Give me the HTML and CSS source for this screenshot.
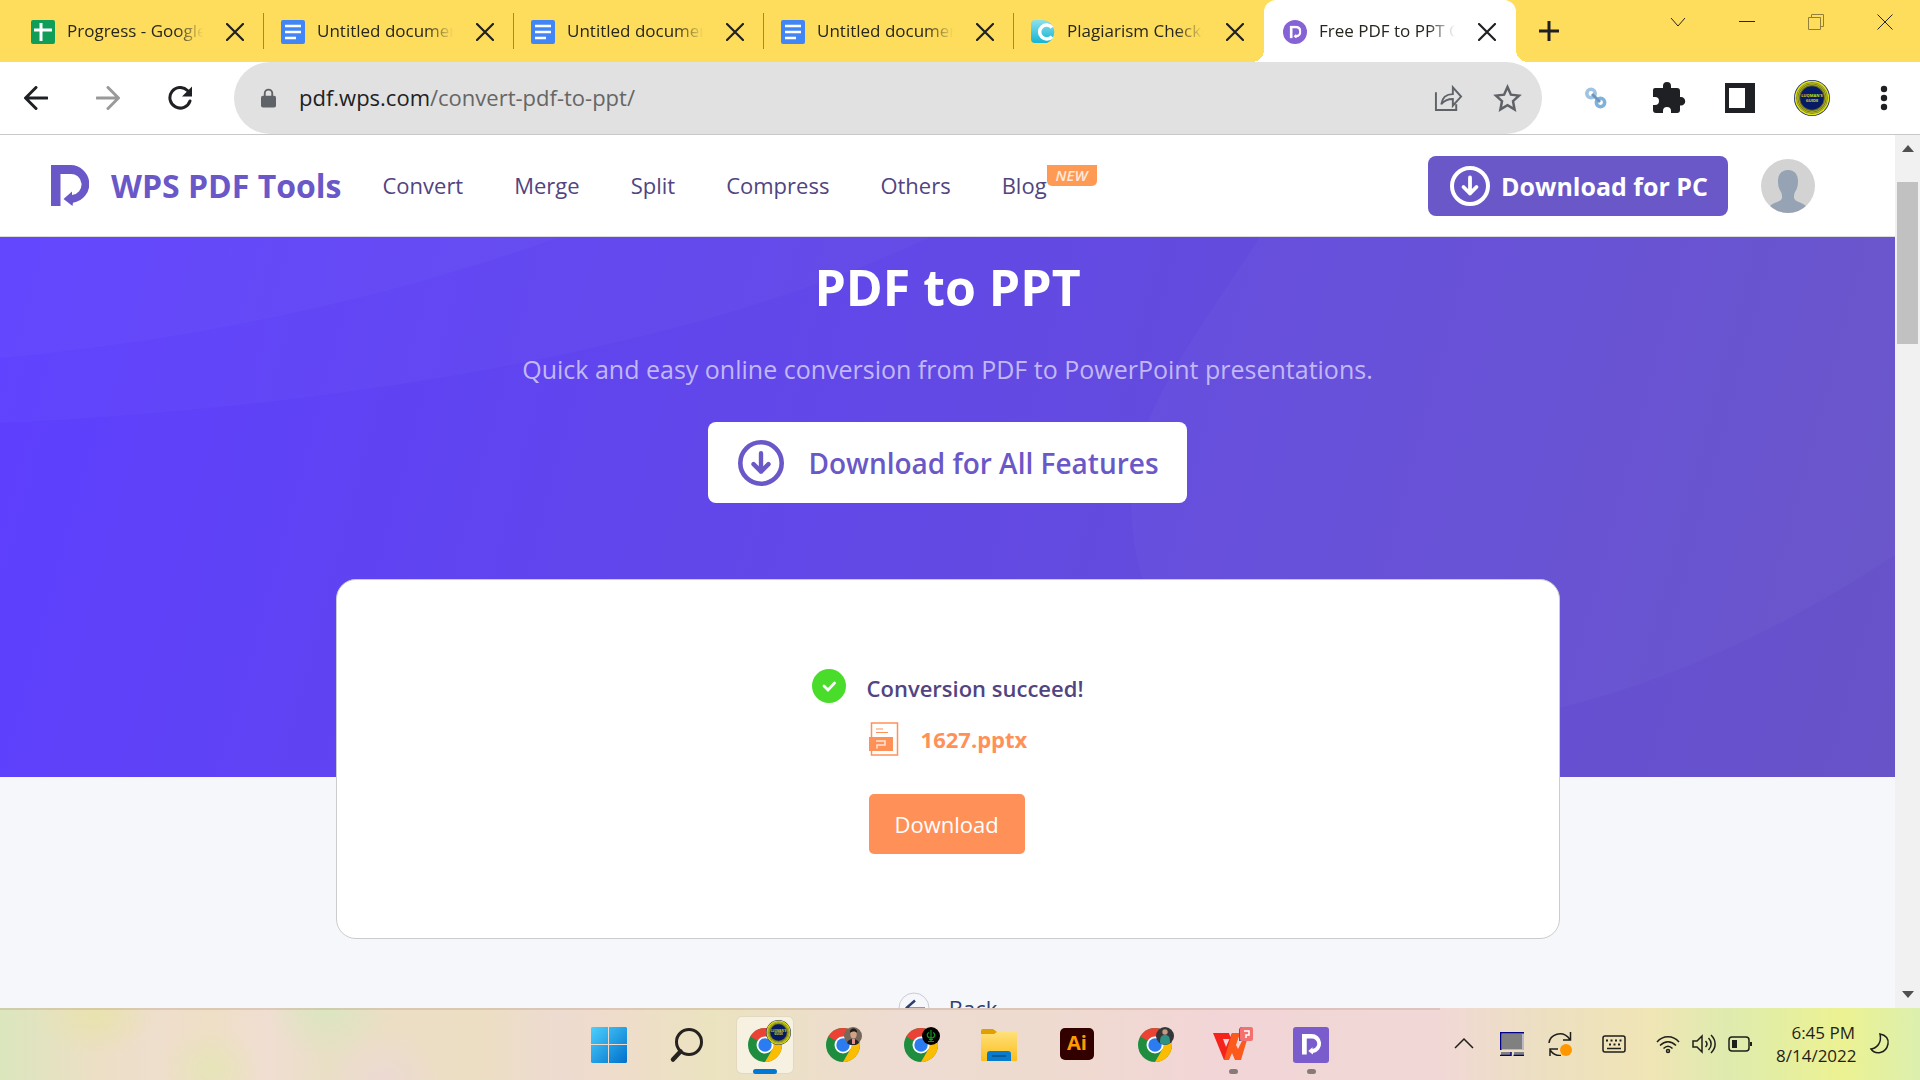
FILE: index.html
```
<!DOCTYPE html>
<html lang="en">
<head>
    <meta charset="UTF-8">
    <meta name="viewport" content="width=device-width, initial-scale=1.0">
    <title>Free PDF to PPT Converter</title>
    <link rel="stylesheet" href="styles.css">
</head>
<body>
    <!-- shared icons -->
    <svg class="sprite" aria-hidden="true">
        <symbol id="docs" viewBox="0 0 24 24">
            <rect width="24" height="24" rx="2" fill="#4285f4"/>
            <path d="M4 6h16M4 12h16M4 18h11" stroke="#fff" stroke-width="2.600"/>
        </symbol>
        <symbol id="close" viewBox="0 0 18 18">
            <path d="M1 1l16 16M17 1L1 17" stroke="#1f2023" stroke-width="2.200" stroke-linecap="round"/>
        </symbol>
        <symbol id="wps-p" viewBox="0 0 38 41">
            <path fill="currentColor" d="M0 0h19a19 19 0 0 1 3 37.800l-.5 3.200-9-7 8.500-7.500v3.500A10.500 10.500 0 0 0 19 9H9.500v32H0z"/>
        </symbol>
        <symbol id="down-circle" viewBox="0 0 40 40">
            <g fill="none" stroke="currentColor" stroke-linecap="round" stroke-linejoin="round">
                <circle cx="20" cy="20" r="18" stroke-width="4"/>
                <path d="M20 11.500v16M13.500 21l6.500 6.500 6.500-6.500" stroke-width="3.800"/>
            </g>
        </symbol>
        <symbol id="chrome" viewBox="0 0 34 34">
            <circle cx="17" cy="17" r="17" fill="#1e8e3e"/>
            <path d="M17 17L2.300 8.500a17 17 0 0 1 29.400 0z" fill="#ea4335"/>
            <path d="M17 8.500h14.700A17 17 0 0 1 17 34l7.400-12.800z" fill="#fbbc04"/>
            <circle cx="17" cy="17" r="8.500" fill="#fff"/>
            <circle cx="17" cy="17" r="6.700" fill="#2b7cf0"/>
        </symbol>
        <symbol id="guide" viewBox="0 0 36 36">
            <circle cx="18" cy="18" r="18" fill="#232d6c"/>
            <circle cx="18" cy="18" r="17.200" fill="#dfe316"/>
            <circle cx="18" cy="18" r="14.500" fill="#6d7123"/>
            <circle cx="18" cy="18" r="15.500" fill="none" stroke="#8c9020"/>
            <circle cx="18" cy="18" r="13.500" fill="none" stroke="#a8ac1a"/>
            <circle cx="18" cy="18" r="11.800" fill="#061a66"/>
            <text x="18" y="17" class="guide-text">LUQMAN'S</text>
            <text x="18" y="22" class="guide-text">GUIDE</text>
        </symbol>
    </svg>

    <div class="tabs">
        <div class="tab">
            <svg class="favicon" viewBox="0 0 24 24"><rect width="24" height="24" rx="2" fill="#0f9d58"/><path d="M10 3v18M3 10h18" stroke="#fff" stroke-width="3"/></svg>
            <span class="tab-title">Progress - Google Sheets</span>
            <button class="tab-close" aria-label="Close tab"><svg><use href="#close"/></svg></button>
        </div>
        <div class="tab">
            <svg class="favicon"><use href="#docs"/></svg>
            <span class="tab-title">Untitled document - Google</span>
            <button class="tab-close" aria-label="Close tab"><svg><use href="#close"/></svg></button>
        </div>
        <div class="tab">
            <svg class="favicon"><use href="#docs"/></svg>
            <span class="tab-title">Untitled document - Google</span>
            <button class="tab-close" aria-label="Close tab"><svg><use href="#close"/></svg></button>
        </div>
        <div class="tab">
            <svg class="favicon"><use href="#docs"/></svg>
            <span class="tab-title">Untitled document - Google</span>
            <button class="tab-close" aria-label="Close tab"><svg><use href="#close"/></svg></button>
        </div>
        <div class="tab last">
            <svg class="favicon" viewBox="0 0 24 24">
                <defs><linearGradient id="teal" x2="0" y2="1"><stop stop-color="#8de0ea"/><stop offset="1" stop-color="#13b4d4"/></linearGradient></defs>
                <path d="M4 0h8a12 12 0 0 1 4 23H4a4 4 0 0 1-4-4V4a4 4 0 0 1 4-4z" fill="url(#teal)"/>
                <path d="M21 7.500a7 7 0 1 0 0 9" fill="none" stroke="#fff" stroke-width="3.500"/>
            </svg>
            <span class="tab-title">Plagiarism Checker | Copy</span>
            <button class="tab-close" aria-label="Close tab"><svg><use href="#close"/></svg></button>
        </div>
        <div class="tab active">
            <svg class="favicon" viewBox="0 0 24 24">
                <circle cx="12" cy="12" r="12" fill="#8562d6"/>
                <svg class="logo-p" x="6.500" y="5.500" width="12" height="13"><use href="#wps-p"/></svg>
            </svg>
            <span class="tab-title">Free PDF to PPT Converter</span>
            <button class="tab-close" aria-label="Close tab"><svg><use href="#close"/></svg></button>
        </div>
        <button class="new-tab" aria-label="New tab"><svg viewBox="0 0 22 22"><path d="M11 1v20M1 11h20" stroke="#1f2023" stroke-width="3"/></svg></button>
        <div class="window-controls">
            <button aria-label="Search tabs"><svg viewBox="0 0 16 16"><path d="M1 4l7 8 7-8"/></svg></button>
            <button aria-label="Minimize"><svg viewBox="0 0 16 16"><path d="M0 7.500h16"/></svg></button>
            <button class="faded" aria-label="Restore"><svg viewBox="0 0 16 16"><path d="M.5 3.500h12v12H.5zM3.500 3.500v-3h12v12h-3"/></svg></button>
            <button aria-label="Close window"><svg viewBox="0 0 16 16"><path d="M.5.5l15 15M15.500.5l-15 15"/></svg></button>
        </div>
    </div>

    <div class="toolbar">
        <div class="nav-buttons">
            <button aria-label="Back"><svg viewBox="0 0 24 24"><path d="M23 12H2M12 1.500L1.500 12 12 22.500"/></svg></button>
            <button class="disabled" aria-label="Forward"><svg viewBox="0 0 24 24"><path d="M1 12h21M12 1.500L22.500 12 12 22.500"/></svg></button>
            <button aria-label="Reload"><svg viewBox="0 0 24 24"><path d="M22 15a10.300 10.300 0 1 1-2.500-10.500"/><path d="M24 .5v10H14z" class="solid"/></svg></button>
        </div>
        <div class="omnibox">
            <svg class="lock" viewBox="0 0 16 20"><path d="M4 8V5a4 4 0 0 1 8 0v3" fill="none" stroke="#5f6368" stroke-width="2"/><rect y="7.500" width="16" height="12.500" rx="2" fill="#5f6368"/></svg>
            <a class="url" href="#">pdf.wps.com<span>/convert-pdf-to-ppt/</span></a>
            <button aria-label="Share"><svg viewBox="0 0 30 28" fill="none" stroke="#5f6368" stroke-width="2"><path d="M2 8v18.500h21v-6M7.500 20.500c1-7 5-10.500 12-10.500V3l8.500 9.500-8.500 9.500v-7c-5 0-9 1.500-12 5.500z"/></svg></button>
            <button aria-label="Bookmark"><svg viewBox="0 0 28 28" fill="none" stroke="#5f6368" stroke-width="2.500"><path d="M14 3l3.400 7.700 8.100.9-6 5.600 1.600 8.200-7.100-4.200-7.100 4.200 1.600-8.200-6-5.600 8.100-.9z"/></svg></button>
        </div>
        <div class="extensions">
            <button aria-label="Link extension"><svg viewBox="0 0 36 36" fill="none" stroke="#7fb2da" stroke-width="3.500"><circle cx="13" cy="13.500" r="4.200" stroke="#9fc3e0"/><circle cx="22.500" cy="22.500" r="4.200"/><path d="M14 14l8 8" stroke="#6a98c4" stroke-width="3"/></svg></button>
            <button aria-label="Extensions"><svg viewBox="0 0 36 36" fill="#1f2023"><path d="M5 8h8V6a4 4 0 0 1 8 0v2h6a3 3 0 0 1 3 3v6h1a4 4 0 0 1 0 8.500h-1V30a3 3 0 0 1-3 3h-6v-2a4 4 0 0 0-8 0v2H6a3 3 0 0 1-3-3v-5h2a4 4 0 0 0 0-8H3v-7a2 2 0 0 1 2-2z"/></svg></button>
            <button aria-label="Side panel"><svg viewBox="0 0 36 36"><path d="M3 3h30v30H3zM7 8v20h16V8z" fill="#1f2023" fill-rule="evenodd"/></svg></button>
            <button aria-label="Profile"><svg><use href="#guide"/></svg></button>
            <button aria-label="Menu"><svg viewBox="0 0 36 36" fill="#1f2023"><circle cx="18" cy="9" r="3.200"/><circle cx="18" cy="18" r="3.200"/><circle cx="18" cy="27" r="3.200"/></svg></button>
        </div>
    </div>

    <div class="viewport">
        <div class="page">
            <header class="site-header">
                <a class="brand" href="#">
                    <svg><use href="#wps-p"/></svg>
                    WPS PDF Tools
                </a>
                <nav>
                    <a href="#">Convert</a>
                    <a href="#">Merge</a>
                    <a href="#">Split</a>
                    <a href="#">Compress</a>
                    <a href="#">Others</a>
                    <a href="#" class="blog">Blog<span class="badge">NEW</span></a>
                </nav>
                <button class="btn-pc"><svg><use href="#down-circle"/></svg>Download for PC</button>
                <svg class="avatar" viewBox="0 0 54 54">
                    <defs><clipPath id="round"><circle cx="27" cy="27" r="27"/></clipPath></defs>
                    <circle cx="27" cy="27" r="27" fill="#d3d3d3"/>
                    <path clip-path="url(#round)" fill="#96a3b4" d="M27 11c7 0 10 5 10 11 0 5-1 8-3 11-1 2-1 4-1 6 1 4 8 4 12 8v9H9v-9c4-4 11-4 12-8 0-2 0-4-1-6-2-3-3-6-3-11 0-6 3-11 10-11z"/>
                </svg>
            </header>

            <section class="hero">
                <svg class="hero-bg" viewBox="0 0 1895 540" preserveAspectRatio="none" aria-hidden="true">
                    <path d="M0 0h930C700 110 350 170 0 186z"/>
                    <path d="M0 0h560C380 65 180 105 0 121z"/>
                    <path d="M1260 0C1195 100 1131 180 1131 262c0 130 80 230 260 230 190 0 370-85 504-174V0z"/>
                </svg>
                <h1>PDF to PPT</h1>
                <p>Quick and easy online conversion from PDF to PowerPoint presentations.</p>
                <button class="btn-all"><svg><use href="#down-circle"/></svg>Download for All Features</button>
            </section>

            <main class="card">
                <div class="result">
                    <svg class="check" viewBox="0 0 34 34"><circle cx="17" cy="17" r="17" fill="#49dc2a"/><path d="M12 17l4 4 6.500-7" fill="none" stroke="#fff" stroke-width="2.800" stroke-linecap="round"/></svg>
                    <h2>Conversion succeed!</h2>
                    <a class="file" href="#">
                        <svg viewBox="0 0 30 34">
                            <rect x="2.500" y="1" width="26" height="32" fill="#fff" stroke="#ff9158" stroke-width="1.500"/>
                            <path d="M7 7h7M7 10.500h12" stroke="#ff9158"/>
                            <path d="M0 15h24v14H0z" fill="#ff9158"/>
                            <path d="M7 19h9v4H8v3.500" fill="none" stroke="#ffe3d4" stroke-width="1.500"/>
                        </svg>
                        1627.pptx
                    </a>
                    <button class="btn-download">Download</button>
                </div>
            </main>

            <a class="back" href="#">
                <svg viewBox="0 0 32 32" fill="none"><circle cx="16" cy="16" r="15" stroke="#c9cbd3"/><path d="M27 15.500H9" stroke="#8d96b5"/><path d="M17 8.500L9 15.500l8 7" stroke="#2f3e74" stroke-width="2.500"/></svg>
                Back
            </a>
        </div>
        <div class="scrollbar">
            <svg viewBox="0 0 12 7"><path d="M0 7l6-7 6 7z"/></svg>
            <div class="thumb"></div>
            <svg viewBox="0 0 12 7"><path d="M0 0h12L6 7z"/></svg>
        </div>
    </div>

    <footer class="taskbar">
        <div class="apps">
            <button aria-label="Start"><svg viewBox="0 0 36 36">
                <defs><linearGradient id="win" gradientUnits="userSpaceOnUse" x2="36" y2="36"><stop stop-color="#4cd0fd"/><stop offset="1" stop-color="#0070cc"/></linearGradient></defs>
                <path d="M1 0h16v17H0V1zM18 0h17l1 1v16H18zM0 18h17v18H1l-1-1zM18 18h18v17l-1 1H18z" fill="url(#win)"/></svg></button>
            <button aria-label="Search"><svg viewBox="0 0 36 36" fill="none" stroke="#26221f"><circle cx="20" cy="15" r="12.500" stroke-width="3"/><path d="M11.500 24.500L4 32.500" stroke-width="4.500" stroke-linecap="round"/></svg></button>
            <button class="running current" aria-label="Chrome">
                <svg class="small"><use href="#chrome"/></svg>
                <svg class="sub guide"><use href="#guide"/></svg>
            </button>
            <button aria-label="Chrome profile 2">
                <svg class="small"><use href="#chrome"/></svg>
                <svg class="sub" viewBox="0 0 18 18"><circle cx="9" cy="9" r="9" fill="#75685a"/><path d="M3 16c1-3 3-4 6-4s5 1 6 4a9 9 0 0 1-12 0z" fill="#26242a"/><path d="M8 12h3v5H8z" fill="#e58d8d"/><ellipse cx="9.500" cy="7" rx="3.200" ry="4.500" fill="#d3a184"/><path d="M6 6c-1-6 8-6 7 0-1-2-5-2-7 0z" fill="#201b1a"/></svg>
            </button>
            <button aria-label="Chrome profile 3">
                <svg class="small"><use href="#chrome"/></svg>
                <svg class="sub" viewBox="0 0 18 18"><circle cx="9" cy="9" r="9"/><path d="M9 3v8M7 5.500C4 7 5 11 9 11s5-4 2-5.500M6 14.500h6M7 12.500h4M9 11v3" fill="none" stroke="#0a9a18" stroke-width="1.200"/></svg>
            </button>
            <button aria-label="File Explorer"><svg viewBox="0 0 36 36">
                <defs><linearGradient id="folder" x2="0" y2="1"><stop stop-color="#ffe07a"/><stop offset="1" stop-color="#fbbe1c"/></linearGradient></defs>
                <path d="M0 4a2 2 0 0 1 2-2h10l4 3h20v8H0z" fill="#dfa000"/><path d="M0 7h13l3-2h20v28a1 1 0 0 1-1 1H1a1 1 0 0 1-1-1z" fill="url(#folder)"/>
                <path d="M6 34V27a3 3 0 0 1 3-3h18a3 3 0 0 1 3 3v7z" fill="#087ccc"/><path d="M11 29h14" stroke="#0a4c86" stroke-width="1.500"/></svg></button>
            <button aria-label="Illustrator"><svg viewBox="0 0 36 36"><rect x="1" y="1" width="34" height="32" rx="5" fill="#300"/><text x="18" y="23" class="ai-text">Ai</text></svg></button>
            <button aria-label="Chrome profile 4">
                <svg class="small"><use href="#chrome"/></svg>
                <svg class="sub" viewBox="0 0 18 18"><circle cx="9" cy="9" r="9" fill="#343638"/><path d="M4 16c0-6 1-8 5-8s5 2 5 8a9 9 0 0 1-10 0z" fill="#2d9185"/><circle cx="9" cy="5" r="2.700" fill="#c39a86"/></svg>
            </button>
            <button class="running" aria-label="WPS Office">
                <svg class="wps" viewBox="0 0 40 36">
                    <path d="M0 6h16l2 6h-8l3 8 6-14h8L15 33h-4z" fill="#f5231b"/>
                    <path d="M19 6h8l-4 12 2 4 8-16h3L28 33h-6l-3-7-3 7h-5z" fill="#fb5a1c"/>
                    <path d="M26 3c0-3 3-4 8-3l-2 14h-6z" fill="#535c98"/><rect x="27" y="0" width="13" height="14" rx="2" fill="#f4716f"/><path d="M31 4h5v4h-3v3" fill="none" stroke="#fff" stroke-width="1.500"/>
                </svg>
            </button>
            <button class="running" aria-label="WPS PDF">
                <svg viewBox="0 0 36 36"><rect width="36" height="36" rx="3" fill="#7a5ccd"/><path transform="translate(9 7) scale(.5)" fill="#fff" d="M0 0h19a19 19 0 0 1 3 37.800l-.5 3.200-9-7 8.500-7.500v3.500A10.500 10.500 0 0 0 19 9H9.500v32H0z"/></svg>
            </button>
        </div>
        <div class="tray">
            <svg viewBox="0 0 24 24"><path d="M3 16l9-9 9 9"/></svg>
            <svg viewBox="0 0 24 24" class="flat"><path d="M0 0h24v18H0z" fill="#b8b8c8"/><path d="M.5 18V.5H24" fill="none" stroke="#00008b" stroke-width="2"/><path d="M2 2h20v15H2zM1 20h10v3H1zM14 20h10v3H14z" fill="#808080"/><path d="M0 23.500h11M13.500 23.500H24M11 20v4" stroke="#00008b"/></svg>
            <svg viewBox="0 0 24 24"><path d="M1 11C2 3 14-3 22 7.500M22.500 0v8H15M2 24v-7h8M2 18c3 4 7 6 11 5.500"/><circle cx="18" cy="18" r="6" fill="#ff9800" stroke="none"/></svg>
            <svg class="keyboard" viewBox="0 0 24 24"><rect x="1" y="4" width="22" height="16" rx="2"/><path d="M4 8.500h17M7 12.500h12" stroke-dasharray="2 2.500" stroke-width="2"/><path d="M5 16.500h14"/></svg>
            <div class="status">
                <svg viewBox="0 0 24 24"><path d="M1 10c6-7 16-7 22 0M4 13.500c5-5 11-5 16 0M7.500 16.500c3-3 6-3 9 0"/><circle cx="12" cy="19" r="1.500"/></svg>
                <svg viewBox="0 0 24 24"><path d="M1 9h4l5-5v16l-5-5H1zM13.500 9c2 2 2 4 0 6M16.500 6c3.500 3.500 3.500 8.500 0 12M19 3c5.500 5.500 5.500 12.500 0 18"/></svg>
                <svg viewBox="0 0 24 24"><rect x="1" y="5" width="20" height="14" rx="3"/><path d="M4 8h5v8H4zM22 10h2v4h-2z" fill="#1f1f1a" stroke="none"/></svg>
            </div>
            <div class="clock"><time>6:45 PM</time><time>8/14/2022</time></div>
            <svg class="moon" viewBox="0 0 24 24"><path d="M12 2c6 1 9 5 8 10-2 10-13 11-17 5 6-1 11-6 9-15z"/></svg>
        </div>
    </footer>
</body>
</html>
```
FILE: styles.css
```
* {
    box-sizing: border-box;
}
body {
    display: flex;
    flex-direction: column;
    height: 100vh;
    margin: 0;
    overflow: hidden;
    font-family: "Open Sans", "Noto Sans", sans-serif;
    background-color: #fff;
}
.sprite {
    position: absolute;
    width: 0;
    height: 0;
}
svg {
    display: block;
    flex-shrink: 0;
}
button {
    padding: 0;
    border: none;
    background: none;
    font-family: inherit;
    cursor: pointer;
}
a {
    color: inherit;
    text-decoration: none;
}
.guide-text {
    fill: #d8dc20;
    font-size: 4px;
    font-weight: bold;
    text-anchor: middle;
}
.ai-text {
    fill: #ff9a00;
    font-size: 20px;
    font-weight: bold;
    text-anchor: middle;
}

/* Tab strip */
.tabs {
    display: flex;
    height: 62px;
    padding-left: 14px;
    background-color: #fedd5d;
}
.tab {
    display: flex;
    align-items: center;
    flex: 0 1 250px;
    min-width: 0;
    padding: 2px 20px 0 17px;
    font-size: 17px;
    line-height: 24px;
    color: #26261f;
    background: linear-gradient(#9c8a44, #9c8a44) right center / 1px 36px no-repeat;
}
.tab.last {
    background: none;
}
.tab.active {
    position: relative;
    flex-basis: 252px;
    padding-left: 19px;
    background: #fff;
    border-radius: 12px 12px 0 0;
}
.tab.active::before,
.tab.active::after {
    content: "";
    position: absolute;
    bottom: 0;
    width: 12px;
    height: 12px;
}
.tab.active::before {
    right: 100%;
    background: radial-gradient(circle at 0 0, transparent 12px, #fff 12px);
}
.tab.active::after {
    left: 100%;
    background: radial-gradient(circle at 100% 0, transparent 12px, #fff 12px);
}
.favicon {
    width: 24px;
    height: 24px;
}
.logo-p {
    color: #fff;
}
.tab-title {
    flex: 1;
    margin: 0 20px 0 12px;
    padding-bottom: 2px;
    overflow: hidden;
    white-space: nowrap;
    -webkit-mask-image: linear-gradient(to right, #000 78%, transparent 98%);
    mask-image: linear-gradient(to right, #000 78%, transparent 98%);
}
.tab-close svg {
    width: 18px;
    height: 18px;
}
.new-tab {
    margin-left: 22px;
}
.new-tab svg {
    width: 22px;
    height: 22px;
}
.window-controls {
    display: flex;
    align-items: flex-start;
    gap: 53px;
    margin-left: auto;
    padding: 14px 27px 0 0;
}
.window-controls svg {
    width: 16px;
    height: 16px;
    fill: none;
    stroke: #26261f;
}
.window-controls .faded {
    opacity: 0.5;
}

/* Address bar */
.toolbar {
    display: flex;
    align-items: center;
    height: 73px;
    border-bottom: 1px solid #c8c8c8;
}
.nav-buttons {
    display: flex;
    gap: 48px;
    padding: 0 42px 0 24px;
}
.nav-buttons svg {
    width: 24px;
    height: 24px;
    fill: none;
    stroke: #1f2023;
    stroke-width: 3;
    stroke-linecap: round;
}
.nav-buttons .solid {
    fill: #1f2023;
    stroke: none;
}
.nav-buttons .disabled {
    opacity: 0.45;
}
.omnibox {
    display: flex;
    align-items: center;
    flex: 1;
    height: 72px;
    padding: 0 20px 0 27px;
    border-radius: 36px;
    background-color: #e1e1e1;
}
.omnibox button {
    margin-left: 30px;
}
.omnibox button svg {
    width: 29px;
    height: 28px;
}
.lock {
    width: 15px;
    height: 20px;
}
.url {
    flex: 1;
    margin-left: 23px;
    padding-bottom: 2px;
    font-size: 22px;
    color: #202124;
}
.url span {
    color: #666;
}
.extensions {
    display: flex;
    gap: 36px;
    padding: 0 18px 0 36px;
}
.extensions svg {
    width: 36px;
    height: 36px;
}

/* Web page */
.viewport {
    display: flex;
    flex: 1;
    min-height: 0;
}
.page {
    flex: 1;
    overflow: hidden;
    background-color: #f6f7fb;
}
.site-header {
    display: flex;
    align-items: center;
    height: 102px;
    padding: 0 80px 0 51px;
    border-bottom: 1px solid #ddd;
    background-color: #fff;
}
.brand {
    display: flex;
    align-items: center;
    gap: 22px;
    font-size: 32px;
    font-weight: 700;
    line-height: 40px;
    color: #6a58c8;
}
.brand svg {
    width: 38px;
    height: 41px;
}
.site-header nav {
    display: flex;
    gap: 51px;
    margin-left: 41px;
    padding-bottom: 2px;
    font-size: 22px;
    color: #51447f;
}
.blog {
    position: relative;
}
.badge {
    position: absolute;
    left: 100%;
    top: -5px;
    padding: 0 9px;
    border-radius: 0 0 5px 5px;
    font-size: 15px;
    font-style: italic;
    font-weight: 600;
    line-height: 21px;
    color: #ffe9dc;
    background-color: #ff9a54;
}
.btn-pc,
.btn-all {
    display: flex;
    align-items: center;
    border-radius: 8px;
}
.btn-pc {
    gap: 11px;
    height: 60px;
    margin-left: auto;
    padding: 0 20px 0 22px;
    font-size: 25px;
    font-weight: 700;
    color: #fff;
    background-color: #6a58c8;
}
.btn-pc svg {
    width: 40px;
    height: 40px;
}
.avatar {
    width: 54px;
    height: 54px;
    margin-left: 33px;
}
.hero {
    position: relative;
    display: flex;
    flex-direction: column;
    align-items: center;
    height: 540px;
    padding-top: 15px;
    color: #fff;
    background: linear-gradient(105deg, #5d3fff, #6853c8);
}
.hero-bg {
    position: absolute;
    inset: 0;
    width: 100%;
    height: 100%;
    fill: rgba(255, 255, 255, 0.025);
}
.hero h1 {
    position: relative;
    margin: 0;
    font-size: 50px;
    line-height: 70px;
}
.hero p {
    position: relative;
    margin: 27px 0 33px;
    font-size: 25px;
    line-height: 40px;
    color: #c2b8f5;
}
.btn-all {
    position: relative;
    gap: 24px;
    height: 81px;
    padding: 0 28px 0 30px;
    font-size: 28px;
    font-weight: 600;
    color: #6a58c8;
    background-color: #fff;
}
.btn-all svg {
    width: 46px;
    height: 46px;
}
.card {
    position: relative;
    display: flex;
    justify-content: center;
    width: 1224px;
    max-width: 90%;
    height: 360px;
    margin: -198px auto 0;
    padding-top: 89px;
    border: 1px solid #ccc;
    border-radius: 20px;
    background-color: #fff;
}
.result {
    display: grid;
    grid-template-columns: 34px auto;
    column-gap: 21px;
    align-content: start;
    justify-items: start;
}
.check {
    width: 34px;
    height: 34px;
}
.result h2 {
    margin: 2px 0 0;
    font-size: 22px;
    font-weight: 600;
    line-height: 34px;
    color: #51447f;
}
.file {
    display: flex;
    grid-column: 2;
    align-items: center;
    gap: 22px;
    margin: 17px 0 38px 2px;
    font-size: 22px;
    font-weight: 700;
    line-height: 34px;
    color: #ff9158;
}
.file svg {
    width: 30px;
    height: 34px;
}
.btn-download {
    grid-column: 2;
    height: 60px;
    margin-left: 2px;
    padding: 0 26px;
    border-radius: 5px;
    font-size: 22px;
    color: #fff;
    background-color: #ff9158;
}
.back {
    display: flex;
    align-items: center;
    justify-content: center;
    gap: 19px;
    margin-top: 53px;
    font-size: 22px;
    line-height: 32px;
    color: #2f3e74;
}
.back svg {
    width: 32px;
    height: 32px;
}
.scrollbar {
    display: flex;
    flex-direction: column;
    align-items: center;
    width: 25px;
    padding: 10px 0;
    background-color: #f1f1f1;
}
.scrollbar svg {
    width: 12px;
    height: 7px;
    fill: #505050;
}
.thumb {
    width: 21px;
    height: 162px;
    margin: 30px 0 auto;
    background-color: #c1c1c1;
}

/* Taskbar */
.taskbar {
    display: grid;
    grid-template-columns: 1fr auto 1fr;
    height: 72px;
    background:
        linear-gradient(rgba(150, 110, 90, 0.2), rgba(150, 110, 90, 0.2)) left top / 75% 2px no-repeat,
        radial-gradient(60px 40px at 5% 10%, #e8e2ae, transparent),
        radial-gradient(50px 40px at 11% 85%, #e6e4b8, transparent),
        radial-gradient(60px 50px at 17% 0, #dbe5c0, transparent),
        radial-gradient(60px 50px at 20% 100%, #ecd9d2, transparent),
        linear-gradient(to right, #dbe6bd, #ecdfc5 5%, #eedecd 8%, #eedfc6 11%, #f0ded2 14%, #e9dfc5 17%, #ecdec5 22%, #ecdec3 25%, #eddbd0 29%, #efdccb 32%, #ebe3c0 37%, #eedbd2 47%, #eedbcf 54%, #f2d5d7 64%, #f1d8d6 75%, #ecdfc2 80%, #f0e5b5 86%, #deebae 90%, #ecf292 96%, #dcefae);
}
.apps {
    display: flex;
    grid-column: 2;
    gap: 22px;
    padding: 9px 0 7px;
}
.apps button {
    position: relative;
    display: flex;
    align-items: center;
    justify-content: center;
    width: 56px;
    border-radius: 5px;
}
.apps svg {
    width: 36px;
    height: 36px;
}
.apps .small {
    width: 34px;
    height: 34px;
}
.apps .wps {
    width: 40px;
}
.apps .sub {
    position: absolute;
    top: 10px;
    right: 9px;
    width: 18px;
    height: 18px;
}
.apps .sub.guide {
    top: 3px;
    right: 2px;
    width: 25px;
    height: 25px;
}
.apps .current {
    background-color: #f6f1e0;
    box-shadow: 0 0 0 1px #e4d9c0;
}
.running::after {
    content: "";
    position: absolute;
    bottom: -1px;
    width: 9px;
    height: 5px;
    border-radius: 3px;
    background-color: #877a79;
}
.running.current::after {
    width: 24px;
    background-color: #0078d4;
}
.tray {
    display: flex;
    align-items: center;
    justify-content: flex-end;
    gap: 24px;
    padding-right: 28px;
}
.tray svg {
    width: 24px;
    height: 24px;
    fill: none;
    stroke: #1f1f1a;
    stroke-width: 1.5;
}
.tray .flat {
    stroke: none;
}
.tray .keyboard {
    margin: 0 6px;
}
.status {
    display: flex;
    gap: 12px;
}
.clock {
    display: flex;
    flex-direction: column;
    width: 79px;
    font-size: 17px;
    line-height: 23px;
    text-align: right;
    color: #1f1f1a;
}
.tray .moon {
    margin-left: -11px;
}
```
